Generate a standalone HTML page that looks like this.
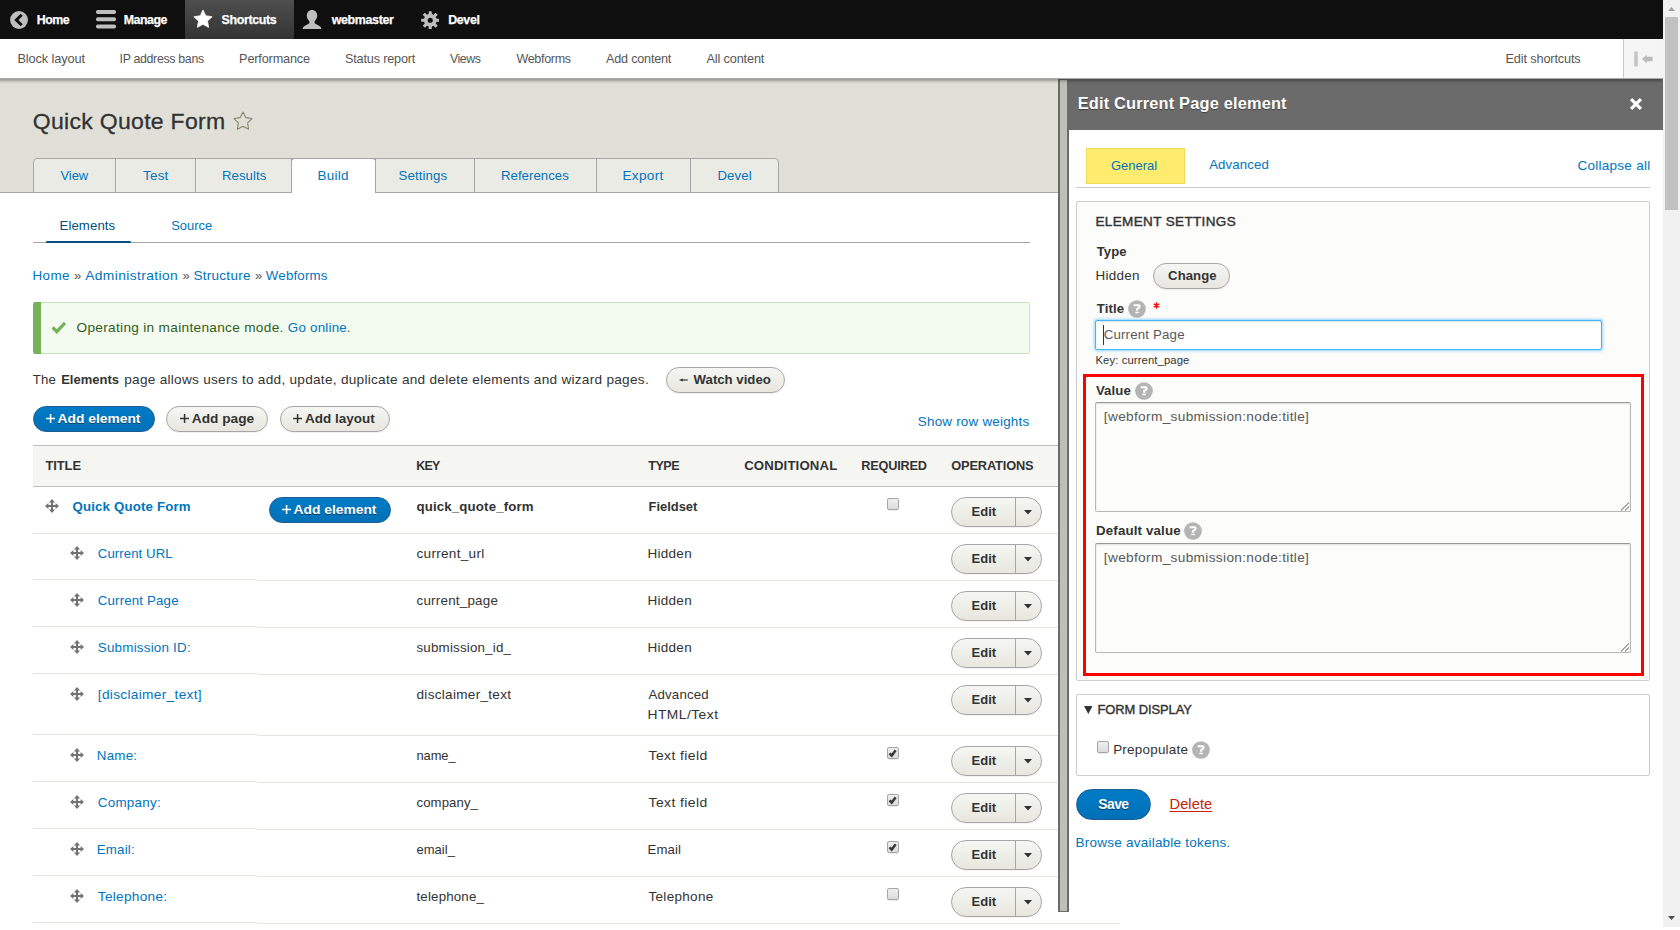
<!DOCTYPE html>
<html lang="en"><head><meta charset="utf-8"><title>Quick Quote Form | Build</title>
<style>
html,body{margin:0;padding:0;background:#fff;}
body{font-family:"Liberation Sans",sans-serif;font-size:13px;color:#333;overflow:hidden;}
#page{position:relative;width:1680px;height:930px;overflow:hidden;background:#fff;}
#page div,#page span.t,#page svg{position:absolute;box-sizing:border-box;}
span.t{white-space:pre;display:block;transform-origin:0 50%;}
.btn{border:1px solid #a6a6a6;border-radius:20px;background:linear-gradient(to bottom,#f6f6f3,#e7e7df);box-shadow:0 1px 1px rgba(0,0,0,.06);}
.btnp{border:1px solid #1e5c90;border-radius:20px;background:linear-gradient(to bottom,#007bc6,#0071b8);}
.help{border-radius:50%;background:#b5b5b5;}
.cb{border:1px solid #a5a5a5;border-radius:2px;background:linear-gradient(to bottom,#efefef,#dcdcdc);box-shadow:0 1px 0 rgba(0,0,0,.08);}

</style></head>
<body>
<div id="page">
<div style="left:0px;top:78px;width:1680px;height:115px;background:#e0e0d8;"></div>
<div style="left:0px;top:193px;width:1680px;height:737px;background:#fff;"></div>
<span class="t" style="left:32.00px;top:111px;font-size:22.5px;line-height:22.5px;color:#333;letter-spacing:0.278px;transform:translateX(0.78px) scaleX(1.0235);-webkit-text-stroke:0.3px #333;">Quick Quote Form</span>
<svg style="left:233px;top:111px;" width="20" height="20" viewBox="0 0 20 20"><path d="M10.00 1.00L12.82 6.62L19.04 7.56L14.57 11.98L15.58 18.19L10.00 15.30L4.42 18.19L5.43 11.98L0.96 7.56L7.18 6.62z" fill="none" stroke="#85856f" stroke-width="1.1" stroke-linejoin="round"/></svg>
<div style="left:0px;top:192px;width:1058px;height:1px;background:#a6a6a6;"></div>
<div style="left:33px;top:158px;width:746px;height:35px;background:#ebebe6;border:1px solid #a6a6a6;border-radius:4px 4px 0 0;"></div>
<div style="left:115px;top:159px;width:1px;height:33px;background:#a6a6a6;"></div>
<div style="left:195px;top:159px;width:1px;height:33px;background:#a6a6a6;"></div>
<div style="left:291px;top:159px;width:1px;height:33px;background:#a6a6a6;"></div>
<div style="left:375px;top:159px;width:1px;height:33px;background:#a6a6a6;"></div>
<div style="left:474px;top:159px;width:1px;height:33px;background:#a6a6a6;"></div>
<div style="left:596px;top:159px;width:1px;height:33px;background:#a6a6a6;"></div>
<div style="left:690px;top:159px;width:1px;height:33px;background:#a6a6a6;"></div>
<span class="t" style="left:60.00px;top:169px;font-size:13px;line-height:13px;color:#0074bd;letter-spacing:-0.059px;transform:translateX(0.50px) scaleX(0.9938);">View</span>
<span class="t" style="left:143.00px;top:169px;font-size:13px;line-height:13px;color:#0074bd;letter-spacing:0.238px;transform:translateX(0.00px) scaleX(1.0303);">Test</span>
<span class="t" style="left:221.00px;top:169px;font-size:13px;line-height:13px;color:#0074bd;letter-spacing:0.070px;transform:translateX(0.99px) scaleX(1.0099);">Results</span>
<span class="t" style="left:398.00px;top:169px;font-size:13px;line-height:13px;color:#0074bd;letter-spacing:0.121px;transform:translateX(0.50px) scaleX(1.0182);">Settings</span>
<span class="t" style="left:500.00px;top:169px;font-size:13px;line-height:13px;color:#0074bd;letter-spacing:0.067px;transform:translateX(0.99px) scaleX(1.0093);">References</span>
<span class="t" style="left:622.00px;top:169px;font-size:13px;line-height:13px;color:#0074bd;letter-spacing:0.310px;transform:translateX(0.46px) scaleX(1.0438);">Export</span>
<span class="t" style="left:717.00px;top:169px;font-size:13px;line-height:13px;color:#0074bd;letter-spacing:0.105px;transform:translateX(0.49px) scaleX(1.0132);">Devel</span>
<div style="left:291px;top:158px;width:85px;height:35px;background:#fff;border:1px solid #a6a6a6;border-bottom:0;border-radius:4px 4px 0 0;"></div>
<span class="t" style="left:317.00px;top:169px;font-size:13px;line-height:13px;color:#0074bd;letter-spacing:0.244px;transform:translateX(0.46px) scaleX(1.0365);">Build</span>
<div style="left:33px;top:242px;width:997px;height:1px;background:#a6a6a6;"></div>
<div style="left:46px;top:241px;width:85px;height:2px;background:#004f80;border-radius:1px;"></div>
<span class="t" style="left:59.00px;top:219px;font-size:13px;line-height:13px;color:#004f80;letter-spacing:0.106px;transform:translateX(0.49px) scaleX(1.0141);">Elements</span>
<span class="t" style="left:171.00px;top:219px;font-size:13px;line-height:13px;color:#0074bd;letter-spacing:-0.016px;transform:translateX(0.20px) scaleX(0.9980);">Source</span>
<span class="t" style="left:32.00px;top:269px;font-size:13px;line-height:13px;color:#0074bd;letter-spacing:0.363px;transform:translateX(0.47px) scaleX(1.0337);">Home</span>
<span class="t" style="left:74.00px;top:269px;font-size:13px;line-height:13px;color:#555;">»</span>
<span class="t" style="left:85.00px;top:269px;font-size:13px;line-height:13px;color:#0074bd;letter-spacing:0.365px;transform:translateX(0.20px) scaleX(1.0613);">Administration</span>
<span class="t" style="left:182.50px;top:269px;font-size:13px;line-height:13px;color:#555;">»</span>
<span class="t" style="left:193.00px;top:269px;font-size:13px;line-height:13px;color:#0074bd;letter-spacing:0.252px;transform:translateX(0.50px) scaleX(1.0399);">Structure</span>
<span class="t" style="left:255.00px;top:269px;font-size:13px;line-height:13px;color:#555;">»</span>
<span class="t" style="left:265.00px;top:269px;font-size:13px;line-height:13px;color:#0074bd;letter-spacing:0.189px;transform:translateX(0.80px) scaleX(1.0227);">Webforms</span>
<div style="left:33px;top:302px;width:8px;height:52px;background:#77b259;border-radius:2px 0 0 2px;"></div>
<div style="left:41px;top:302px;width:989px;height:52px;background:#f3faef;border:1px solid #c9e1bd;border-left:0;border-radius:0 2px 2px 0;"></div>
<svg style="left:51px;top:321.200px;" width="16" height="13" viewBox="0 0 16 13"><path d="M1.600 6.400l4.200 4.200L14 1.800" fill="none" stroke="#73b355" stroke-width="3.2"/></svg>
<span class="t" style="left:76.00px;top:321px;font-size:13px;line-height:13px;color:#325e1c;letter-spacing:0.299px;transform:translateX(0.50px) scaleX(1.0484);">Operating in maintenance mode.</span>
<span class="t" style="left:287.00px;top:321px;font-size:13px;line-height:13px;color:#0074bd;letter-spacing:0.199px;transform:translateX(0.80px) scaleX(1.0296);">Go online</span>
<span class="t" style="left:346.80px;top:321px;font-size:13px;line-height:13px;color:#325e1c;">.</span>
<span class="t" style="left:32.00px;top:373px;font-size:13px;line-height:13px;color:#333;letter-spacing:0.155px;transform:translateX(0.70px) scaleX(1.0142);">The</span>
<span class="t" style="left:61.00px;top:373px;font-size:13px;line-height:13px;color:#333;font-weight:700;letter-spacing:-0.005px;transform:translateX(0.20px) scaleX(0.9994);">Elements</span>
<span class="t" style="left:124.00px;top:373px;font-size:13px;line-height:13px;color:#333;letter-spacing:0.266px;transform:translateX(0.20px) scaleX(1.0465);">page allows users to add, update, duplicate and delete elements and wizard pages.</span>
<div class="btn" style="left:666px;top:367px;width:119px;height:26px;"></div>
<span class="t" style="left:693.00px;top:374px;font-size:12.64px;line-height:12.64px;color:#333;font-weight:700;transform:translateX(0.60px) scaleX(1.0448);">Watch video</span>
<svg style="left:678.500px;top:378.400px;" width="10" height="4" viewBox="0 0 10 4"><path d="M0 2L3.800 0.400V3.600z" fill="#333"/><path d="M3 2H8.700" stroke="#333" stroke-width="1.200" fill="none"/></svg>
<div class="btnp" style="left:33px;top:406px;width:122px;height:26px;"></div>
<svg style="left:45.8px;top:413.79999999999995px;" width="9.200" height="9.200" viewBox="-4.600 -4.600 9.200 9.200"><path d="M-4.500 0H4.500M0-4.500V4.500" stroke="#fff" stroke-width="1.500" fill="none"/></svg>
<span class="t" style="left:57.00px;top:413px;font-size:12.64px;line-height:12.64px;color:#fff;font-weight:700;transform:translateX(0.60px) scaleX(1.0933);text-shadow:0 1px rgba(0,0,0,.5);">Add element</span>
<div class="btn" style="left:166px;top:406px;width:102px;height:26px;"></div>
<svg style="left:179.5px;top:413.79999999999995px;" width="9.200" height="9.200" viewBox="-4.600 -4.600 9.200 9.200"><path d="M-4.500 0H4.500M0-4.500V4.500" stroke="#333" stroke-width="1.500" fill="none"/></svg>
<span class="t" style="left:191.00px;top:413px;font-size:12.64px;line-height:12.64px;color:#333;font-weight:700;transform:translateX(0.80px) scaleX(1.0836);">Add page</span>
<div class="btn" style="left:280px;top:406px;width:110px;height:26px;"></div>
<svg style="left:292.79999999999995px;top:413.79999999999995px;" width="9.200" height="9.200" viewBox="-4.600 -4.600 9.200 9.200"><path d="M-4.500 0H4.500M0-4.500V4.500" stroke="#333" stroke-width="1.500" fill="none"/></svg>
<span class="t" style="left:305.00px;top:413px;font-size:12.64px;line-height:12.64px;color:#333;font-weight:700;transform:translateX(0.10px) scaleX(1.0663);">Add layout</span>
<span class="t" style="left:917.00px;top:415px;font-size:13px;line-height:13px;color:#0074bd;letter-spacing:0.214px;transform:translateX(0.80px) scaleX(1.0315);">Show row weights</span>
<div style="left:33px;top:445px;width:1100px;height:42px;background:#f5f5f2;border-top:1px solid #bfbfba;border-bottom:1px solid #bfbfba;"></div>
<span class="t" style="left:45.00px;top:459px;font-size:13px;line-height:13px;color:#333;font-weight:700;letter-spacing:-0.080px;transform:translateX(0.50px) scaleX(0.9913);">TITLE</span>
<span class="t" style="left:416.00px;top:459px;font-size:13px;line-height:13px;color:#333;font-weight:700;letter-spacing:-0.699px;transform:translateX(0.20px) scaleX(0.9509);">KEY</span>
<span class="t" style="left:648.00px;top:459px;font-size:13px;line-height:13px;color:#333;font-weight:700;letter-spacing:-0.447px;transform:translateX(0.20px) scaleX(0.9623);">TYPE</span>
<span class="t" style="left:744.00px;top:459px;font-size:13px;line-height:13px;color:#333;font-weight:700;letter-spacing:0.136px;transform:translateX(0.20px) scaleX(1.0153);">CONDITIONAL</span>
<span class="t" style="left:861.00px;top:459px;font-size:13px;line-height:13px;color:#333;font-weight:700;letter-spacing:-0.206px;transform:translateX(0.20px) scaleX(0.9793);">REQUIRED</span>
<span class="t" style="left:951.00px;top:459px;font-size:13px;line-height:13px;color:#333;font-weight:700;letter-spacing:-0.148px;transform:translateX(0.20px) scaleX(0.9847);">OPERATIONS</span>
<div style="left:33px;top:533px;width:1100px;height:1px;background:#e6e4df;"></div>
<svg style="left:45px;top:499px;" width="14" height="14" viewBox="0 0 14 14"><path d="M7 0L10.100 3.400H8.050V5.950H10.600V3.900L14 7L10.600 10.100V8.050H8.050V10.600H10.100L7 14L3.900 10.600H5.950V8.050H3.400V10.100L0 7L3.400 3.900V5.950H5.950V3.400H3.900z" fill="#737373"/></svg>
<span class="t" style="left:72.00px;top:500px;font-size:13px;line-height:13px;color:#0074bd;font-weight:700;letter-spacing:0.152px;transform:translateX(0.50px) scaleX(1.0206);">Quick Quote Form</span>
<div class="btnp" style="left:269px;top:497px;width:122px;height:26px;"></div>
<svg style="left:281.79999999999995px;top:505.09999999999997px;" width="9.200" height="9.200" viewBox="-4.600 -4.600 9.200 9.200"><path d="M-4.500 0H4.500M0-4.500V4.500" stroke="#fff" stroke-width="1.500" fill="none"/></svg>
<span class="t" style="left:293.00px;top:504px;font-size:12.64px;line-height:12.64px;color:#fff;font-weight:700;transform:translateX(0.60px) scaleX(1.0933);text-shadow:0 1px rgba(0,0,0,.5);">Add element</span>
<span class="t" style="left:416.00px;top:500px;font-size:13px;line-height:13px;color:#333;font-weight:700;letter-spacing:0.143px;transform:translateX(0.50px) scaleX(1.0195);">quick_quote_form</span>
<span class="t" style="left:648.00px;top:500px;font-size:13px;line-height:13px;color:#333;font-weight:700;letter-spacing:-0.021px;transform:translateX(0.50px) scaleX(0.9970);">Fieldset</span>
<div class="cb" style="left:887px;top:498px;width:12px;height:12px;"></div>
<div class="btn" style="left:951px;top:497px;width:91px;height:30px;"></div>
<div style="left:1015px;top:498px;width:1px;height:28px;background:#a6a6a6;"></div>
<span class="t" style="left:971.00px;top:505px;font-size:13px;line-height:13px;color:#333;font-weight:700;letter-spacing:-0.004px;transform:translateX(0.60px) scaleX(0.9995);">Edit</span>
<svg style="left:1024px;top:510px;" width="8" height="5" viewBox="0 0 8 5"><path d="M0 0h8L4 4.6z" fill="#333"/></svg>
<div style="left:33px;top:579px;width:224px;height:1px;background:#e6e4df;"></div>
<div style="left:257px;top:580px;width:900px;height:1px;background:#e6e4df;"></div>
<svg style="left:70px;top:546px;" width="14" height="14" viewBox="0 0 14 14"><path d="M7 0L10.100 3.400H8.050V5.950H10.600V3.900L14 7L10.600 10.100V8.050H8.050V10.600H10.100L7 14L3.900 10.600H5.950V8.050H3.400V10.100L0 7L3.400 3.900V5.950H5.950V3.400H3.900z" fill="#737373"/></svg>
<span class="t" style="left:97.00px;top:547px;font-size:13px;line-height:13px;color:#0074bd;letter-spacing:0.092px;transform:translateX(0.80px) scaleX(1.0128);">Current URL</span>
<span class="t" style="left:416.00px;top:547px;font-size:13px;line-height:13px;color:#333;letter-spacing:0.270px;transform:translateX(0.50px) scaleX(1.0454);">current_url</span>
<span class="t" style="left:647.00px;top:547px;font-size:13px;line-height:13px;color:#333;letter-spacing:0.283px;transform:translateX(0.46px) scaleX(1.0367);">Hidden</span>
<div class="btn" style="left:951px;top:544px;width:91px;height:30px;"></div>
<div style="left:1015px;top:545px;width:1px;height:28px;background:#a6a6a6;"></div>
<span class="t" style="left:971.00px;top:552px;font-size:13px;line-height:13px;color:#333;font-weight:700;letter-spacing:-0.004px;transform:translateX(0.60px) scaleX(0.9995);">Edit</span>
<svg style="left:1024px;top:557px;" width="8" height="5" viewBox="0 0 8 5"><path d="M0 0h8L4 4.6z" fill="#333"/></svg>
<div style="left:33px;top:626px;width:224px;height:1px;background:#e6e4df;"></div>
<div style="left:257px;top:627px;width:900px;height:1px;background:#e6e4df;"></div>
<svg style="left:70px;top:593px;" width="14" height="14" viewBox="0 0 14 14"><path d="M7 0L10.100 3.400H8.050V5.950H10.600V3.900L14 7L10.600 10.100V8.050H8.050V10.600H10.100L7 14L3.900 10.600H5.950V8.050H3.400V10.100L0 7L3.400 3.900V5.950H5.950V3.400H3.900z" fill="#737373"/></svg>
<span class="t" style="left:97.00px;top:594px;font-size:13px;line-height:13px;color:#0074bd;letter-spacing:0.152px;transform:translateX(0.80px) scaleX(1.0221);">Current Page</span>
<span class="t" style="left:416.00px;top:594px;font-size:13px;line-height:13px;color:#333;letter-spacing:0.212px;transform:translateX(0.50px) scaleX(1.0316);">current_page</span>
<span class="t" style="left:647.00px;top:594px;font-size:13px;line-height:13px;color:#333;letter-spacing:0.283px;transform:translateX(0.46px) scaleX(1.0367);">Hidden</span>
<div class="btn" style="left:951px;top:591px;width:91px;height:30px;"></div>
<div style="left:1015px;top:592px;width:1px;height:28px;background:#a6a6a6;"></div>
<span class="t" style="left:971.00px;top:599px;font-size:13px;line-height:13px;color:#333;font-weight:700;letter-spacing:-0.004px;transform:translateX(0.60px) scaleX(0.9995);">Edit</span>
<svg style="left:1024px;top:604px;" width="8" height="5" viewBox="0 0 8 5"><path d="M0 0h8L4 4.6z" fill="#333"/></svg>
<div style="left:33px;top:673px;width:224px;height:1px;background:#e6e4df;"></div>
<div style="left:257px;top:674px;width:900px;height:1px;background:#e6e4df;"></div>
<svg style="left:70px;top:640px;" width="14" height="14" viewBox="0 0 14 14"><path d="M7 0L10.100 3.400H8.050V5.950H10.600V3.900L14 7L10.600 10.100V8.050H8.050V10.600H10.100L7 14L3.900 10.600H5.950V8.050H3.400V10.100L0 7L3.400 3.900V5.950H5.950V3.400H3.900z" fill="#737373"/></svg>
<span class="t" style="left:97.00px;top:641px;font-size:13px;line-height:13px;color:#0074bd;letter-spacing:0.201px;transform:translateX(0.80px) scaleX(1.0311);">Submission ID:</span>
<span class="t" style="left:416.00px;top:641px;font-size:13px;line-height:13px;color:#333;letter-spacing:0.181px;transform:translateX(0.50px) scaleX(1.0267);">submission_id_</span>
<span class="t" style="left:647.00px;top:641px;font-size:13px;line-height:13px;color:#333;letter-spacing:0.283px;transform:translateX(0.46px) scaleX(1.0367);">Hidden</span>
<div class="btn" style="left:951px;top:638px;width:91px;height:30px;"></div>
<div style="left:1015px;top:639px;width:1px;height:28px;background:#a6a6a6;"></div>
<span class="t" style="left:971.00px;top:646px;font-size:13px;line-height:13px;color:#333;font-weight:700;letter-spacing:-0.004px;transform:translateX(0.60px) scaleX(0.9995);">Edit</span>
<svg style="left:1024px;top:651px;" width="8" height="5" viewBox="0 0 8 5"><path d="M0 0h8L4 4.6z" fill="#333"/></svg>
<div style="left:33px;top:734px;width:224px;height:1px;background:#e6e4df;"></div>
<div style="left:257px;top:735px;width:900px;height:1px;background:#e6e4df;"></div>
<svg style="left:70px;top:687px;" width="14" height="14" viewBox="0 0 14 14"><path d="M7 0L10.100 3.400H8.050V5.950H10.600V3.900L14 7L10.600 10.100V8.050H8.050V10.600H10.100L7 14L3.900 10.600H5.950V8.050H3.400V10.100L0 7L3.400 3.900V5.950H5.950V3.400H3.900z" fill="#737373"/></svg>
<span class="t" style="left:97.00px;top:688px;font-size:13px;line-height:13px;color:#0074bd;letter-spacing:0.294px;transform:translateX(0.80px) scaleX(1.0530);">[disclaimer_text]</span>
<span class="t" style="left:416.00px;top:688px;font-size:13px;line-height:13px;color:#333;letter-spacing:0.267px;transform:translateX(0.50px) scaleX(1.0449);">disclaimer_text</span>
<span class="t" style="left:648.00px;top:688px;font-size:13px;line-height:13px;color:#333;letter-spacing:0.162px;transform:translateX(0.50px) scaleX(1.0200);">Advanced</span>
<span class="t" style="left:647.00px;top:708px;font-size:13px;line-height:13px;color:#333;letter-spacing:0.452px;transform:translateX(0.44px) scaleX(1.0616);">HTML/Text</span>
<div class="btn" style="left:951px;top:685px;width:91px;height:30px;"></div>
<div style="left:1015px;top:686px;width:1px;height:28px;background:#a6a6a6;"></div>
<span class="t" style="left:971.00px;top:693px;font-size:13px;line-height:13px;color:#333;font-weight:700;letter-spacing:-0.004px;transform:translateX(0.60px) scaleX(0.9995);">Edit</span>
<svg style="left:1024px;top:698px;" width="8" height="5" viewBox="0 0 8 5"><path d="M0 0h8L4 4.6z" fill="#333"/></svg>
<div style="left:33px;top:781px;width:224px;height:1px;background:#e6e4df;"></div>
<div style="left:257px;top:782px;width:900px;height:1px;background:#e6e4df;"></div>
<svg style="left:70px;top:748px;" width="14" height="14" viewBox="0 0 14 14"><path d="M7 0L10.100 3.400H8.050V5.950H10.600V3.900L14 7L10.600 10.100V8.050H8.050V10.600H10.100L7 14L3.900 10.600H5.950V8.050H3.400V10.100L0 7L3.400 3.900V5.950H5.950V3.400H3.900z" fill="#737373"/></svg>
<span class="t" style="left:96.00px;top:749px;font-size:13px;line-height:13px;color:#0074bd;letter-spacing:0.234px;transform:translateX(0.77px) scaleX(1.0262);">Name:</span>
<span class="t" style="left:416.00px;top:749px;font-size:13px;line-height:13px;color:#333;letter-spacing:-0.078px;transform:translateX(0.50px) scaleX(0.9924);">name_</span>
<span class="t" style="left:648.00px;top:749px;font-size:13px;line-height:13px;color:#333;letter-spacing:0.385px;transform:translateX(0.50px) scaleX(1.0727);">Text field</span>
<div class="cb" style="left:887px;top:747px;width:12px;height:12px;"></div>
<svg style="left:887px;top:746px;" width="13" height="13" viewBox="0 0 13 13"><path d="M2.500 7.300L4.700 9.500L8.700 4.300" fill="none" stroke="#383838" stroke-width="2.500"/></svg>
<div class="btn" style="left:951px;top:746px;width:91px;height:30px;"></div>
<div style="left:1015px;top:747px;width:1px;height:28px;background:#a6a6a6;"></div>
<span class="t" style="left:971.00px;top:754px;font-size:13px;line-height:13px;color:#333;font-weight:700;letter-spacing:-0.004px;transform:translateX(0.60px) scaleX(0.9995);">Edit</span>
<svg style="left:1024px;top:759px;" width="8" height="5" viewBox="0 0 8 5"><path d="M0 0h8L4 4.6z" fill="#333"/></svg>
<div style="left:33px;top:828px;width:224px;height:1px;background:#e6e4df;"></div>
<div style="left:257px;top:829px;width:900px;height:1px;background:#e6e4df;"></div>
<svg style="left:70px;top:795px;" width="14" height="14" viewBox="0 0 14 14"><path d="M7 0L10.100 3.400H8.050V5.950H10.600V3.900L14 7L10.600 10.100V8.050H8.050V10.600H10.100L7 14L3.900 10.600H5.950V8.050H3.400V10.100L0 7L3.400 3.900V5.950H5.950V3.400H3.900z" fill="#737373"/></svg>
<span class="t" style="left:97.00px;top:796px;font-size:13px;line-height:13px;color:#0074bd;letter-spacing:0.247px;transform:translateX(0.80px) scaleX(1.0304);">Company:</span>
<span class="t" style="left:416.00px;top:796px;font-size:13px;line-height:13px;color:#333;letter-spacing:0.102px;transform:translateX(0.50px) scaleX(1.0119);">company_</span>
<span class="t" style="left:648.00px;top:796px;font-size:13px;line-height:13px;color:#333;letter-spacing:0.385px;transform:translateX(0.50px) scaleX(1.0727);">Text field</span>
<div class="cb" style="left:887px;top:794px;width:12px;height:12px;"></div>
<svg style="left:887px;top:793px;" width="13" height="13" viewBox="0 0 13 13"><path d="M2.500 7.300L4.700 9.500L8.700 4.300" fill="none" stroke="#383838" stroke-width="2.500"/></svg>
<div class="btn" style="left:951px;top:793px;width:91px;height:30px;"></div>
<div style="left:1015px;top:794px;width:1px;height:28px;background:#a6a6a6;"></div>
<span class="t" style="left:971.00px;top:801px;font-size:13px;line-height:13px;color:#333;font-weight:700;letter-spacing:-0.004px;transform:translateX(0.60px) scaleX(0.9995);">Edit</span>
<svg style="left:1024px;top:806px;" width="8" height="5" viewBox="0 0 8 5"><path d="M0 0h8L4 4.6z" fill="#333"/></svg>
<div style="left:33px;top:875px;width:224px;height:1px;background:#e6e4df;"></div>
<div style="left:257px;top:876px;width:900px;height:1px;background:#e6e4df;"></div>
<svg style="left:70px;top:842px;" width="14" height="14" viewBox="0 0 14 14"><path d="M7 0L10.100 3.400H8.050V5.950H10.600V3.900L14 7L10.600 10.100V8.050H8.050V10.600H10.100L7 14L3.900 10.600H5.950V8.050H3.400V10.100L0 7L3.400 3.900V5.950H5.950V3.400H3.900z" fill="#737373"/></svg>
<span class="t" style="left:96.00px;top:843px;font-size:13px;line-height:13px;color:#0074bd;letter-spacing:0.165px;transform:translateX(0.78px) scaleX(1.0245);">Email:</span>
<span class="t" style="left:416.00px;top:843px;font-size:13px;line-height:13px;color:#333;letter-spacing:0.013px;transform:translateX(0.50px) scaleX(1.0017);">email_</span>
<span class="t" style="left:647.00px;top:843px;font-size:13px;line-height:13px;color:#333;letter-spacing:0.109px;transform:translateX(0.49px) scaleX(1.0139);">Email</span>
<div class="cb" style="left:887px;top:841px;width:12px;height:12px;"></div>
<svg style="left:887px;top:840px;" width="13" height="13" viewBox="0 0 13 13"><path d="M2.500 7.300L4.700 9.500L8.700 4.300" fill="none" stroke="#383838" stroke-width="2.500"/></svg>
<div class="btn" style="left:951px;top:840px;width:91px;height:30px;"></div>
<div style="left:1015px;top:841px;width:1px;height:28px;background:#a6a6a6;"></div>
<span class="t" style="left:971.00px;top:848px;font-size:13px;line-height:13px;color:#333;font-weight:700;letter-spacing:-0.004px;transform:translateX(0.60px) scaleX(0.9995);">Edit</span>
<svg style="left:1024px;top:853px;" width="8" height="5" viewBox="0 0 8 5"><path d="M0 0h8L4 4.6z" fill="#333"/></svg>
<div style="left:33px;top:922px;width:224px;height:1px;background:#e6e4df;"></div>
<div style="left:257px;top:923px;width:900px;height:1px;background:#e6e4df;"></div>
<svg style="left:70px;top:889px;" width="14" height="14" viewBox="0 0 14 14"><path d="M7 0L10.100 3.400H8.050V5.950H10.600V3.900L14 7L10.600 10.100V8.050H8.050V10.600H10.100L7 14L3.900 10.600H5.950V8.050H3.400V10.100L0 7L3.400 3.900V5.950H5.950V3.400H3.900z" fill="#737373"/></svg>
<span class="t" style="left:97.00px;top:890px;font-size:13px;line-height:13px;color:#0074bd;letter-spacing:0.298px;transform:translateX(0.80px) scaleX(1.0445);">Telephone:</span>
<span class="t" style="left:416.00px;top:890px;font-size:13px;line-height:13px;color:#333;letter-spacing:0.168px;transform:translateX(0.50px) scaleX(1.0237);">telephone_</span>
<span class="t" style="left:648.00px;top:890px;font-size:13px;line-height:13px;color:#333;letter-spacing:0.284px;transform:translateX(0.50px) scaleX(1.0396);">Telephone</span>
<div class="cb" style="left:887px;top:888px;width:12px;height:12px;"></div>
<div class="btn" style="left:951px;top:887px;width:91px;height:30px;"></div>
<div style="left:1015px;top:888px;width:1px;height:28px;background:#a6a6a6;"></div>
<span class="t" style="left:971.00px;top:895px;font-size:13px;line-height:13px;color:#333;font-weight:700;letter-spacing:-0.004px;transform:translateX(0.60px) scaleX(0.9995);">Edit</span>
<svg style="left:1024px;top:900px;" width="8" height="5" viewBox="0 0 8 5"><path d="M0 0h8L4 4.6z" fill="#333"/></svg>
<div style="left:1058px;top:79px;width:11px;height:833px;background:#bfbfba;border:1px solid #6b6b6b;border-left-width:2px;border-right-width:2px;"></div>
<div style="left:1069px;top:79px;width:594px;height:833px;background:#fff;"></div>
<div style="left:1067px;top:79px;width:596px;height:51px;background:#6b6b6b;"></div>
<span class="t" style="left:1077.00px;top:96px;font-size:16px;line-height:16px;color:#fff;font-weight:700;letter-spacing:0.177px;transform:translateX(0.78px) scaleX(1.0217);text-shadow:0 1px 1px rgba(0,0,0,.4);">Edit Current Page element</span>
<svg style="left:1629px;top:97px;" width="14" height="14" viewBox="-7 -7 14 14"><path d="M-4.950-4.950L4.950 4.950M4.950-4.950L-4.950 4.950" stroke="#fff" stroke-width="3.200" fill="none"/></svg>
<div style="left:1086px;top:148px;width:99px;height:36px;background:#ffec6e;border:1px solid #f0db52;"></div>
<span class="t" style="left:1111.00px;top:159px;font-size:13px;line-height:13px;color:#0074bd;letter-spacing:-0.013px;transform:translateX(0.00px) scaleX(0.9983);">General</span>
<span class="t" style="left:1209.00px;top:158px;font-size:13px;line-height:13px;color:#0074bd;letter-spacing:0.120px;transform:translateX(0.20px) scaleX(1.0148);">Advanced</span>
<span class="t" style="left:1577.00px;top:159px;font-size:13px;line-height:13px;color:#0074bd;letter-spacing:0.240px;transform:translateX(0.50px) scaleX(1.0407);">Collapse all</span>
<div style="left:1076px;top:187px;width:574px;height:1px;background:#ccc;"></div>
<div style="left:1076px;top:201px;width:574px;height:480px;background:#fcfcfa;border:1px solid #ccc;border-radius:2px;"></div>
<span class="t" style="left:1095.00px;top:215px;font-size:13px;line-height:13px;color:#333;letter-spacing:0.335px;transform:translateX(0.46px) scaleX(1.0404);-webkit-text-stroke:0.4px #333;">ELEMENT SETTINGS</span>
<span class="t" style="left:1096.00px;top:245px;font-size:13px;line-height:13px;color:#333;font-weight:700;letter-spacing:0.042px;transform:translateX(0.80px) scaleX(1.0043);">Type</span>
<span class="t" style="left:1095.00px;top:269px;font-size:13px;line-height:13px;color:#333;letter-spacing:0.264px;transform:translateX(0.47px) scaleX(1.0342);">Hidden</span>
<div class="btn" style="left:1153px;top:263px;width:77px;height:26px;"></div>
<span class="t" style="left:1168.00px;top:269px;font-size:13px;line-height:13px;color:#333;font-weight:700;letter-spacing:0.075px;transform:translateX(0.10px) scaleX(1.0080);">Change</span>
<span class="t" style="left:1096.00px;top:302px;font-size:13px;line-height:13px;color:#333;font-weight:700;letter-spacing:0.091px;transform:translateX(0.80px) scaleX(1.0141);">Title</span>
<svg style="left:1128px;top:300px;" width="18" height="18" viewBox="0 0 18 18"><circle cx="9" cy="9" r="8.850" fill="#b4b4b4"/><path d="M5.600 5.300H10.500Q11.700 5.300 11.700 6.500Q11.700 7.700 9.200 8.900V10.700" stroke="#fff" stroke-width="2.100" fill="none"/><rect x="7.300" y="11.700" width="3.500" height="1.500" fill="#fff"/></svg>
<svg style="left:1153px;top:302px;" width="7" height="7" viewBox="-3.500 -3.500 7 7"><path d="M0-3.200V3.200M-2.800-1.600L2.800 1.600M-2.800 1.600L2.800-1.600" stroke="#e11" stroke-width="1.350" fill="none"/></svg>
<div style="left:1095px;top:320px;width:507px;height:30px;background:#fff;border:1px solid #40b6ff;border-radius:2px;box-shadow:0 0 3px 1px rgba(64,182,255,.55), inset 0 1px 2px rgba(0,0,0,.125);"></div>
<div style="left:1103px;top:325px;width:1px;height:20px;background:#333;"></div>
<span class="t" style="left:1103.00px;top:328px;font-size:13px;line-height:13px;color:#595959;letter-spacing:0.156px;transform:translateX(0.70px) scaleX(1.0228);">Current Page</span>
<span class="t" style="left:1095.00px;top:355px;font-size:11px;line-height:11px;color:#333;letter-spacing:0.120px;transform:translateX(0.50px) scaleX(1.0219);">Key: current_page</span>
<div style="left:1083px;top:374px;width:561px;height:302px;border:3px solid #f00;"></div>
<span class="t" style="left:1095.00px;top:384px;font-size:13px;line-height:13px;color:#333;font-weight:700;letter-spacing:0.119px;transform:translateX(0.90px) scaleX(1.0143);">Value</span>
<svg style="left:1135px;top:382px;" width="18" height="18" viewBox="0 0 18 18"><circle cx="9" cy="9" r="8.850" fill="#b4b4b4"/><path d="M5.600 5.300H10.500Q11.700 5.300 11.700 6.500Q11.700 7.700 9.200 8.900V10.700" stroke="#fff" stroke-width="2.100" fill="none"/><rect x="7.300" y="11.700" width="3.500" height="1.500" fill="#fff"/></svg>
<div style="left:1095px;top:402px;width:536px;height:109.5px;background:#fcfcfa;border:1px solid #b8b8b8;border-top-color:#999;border-radius:2px;box-shadow:inset 0 1px 2px rgba(0,0,0,.125);"></div>
<span class="t" style="left:1103.00px;top:410px;font-size:13px;line-height:13px;color:#595959;letter-spacing:0.307px;transform:translateX(0.80px) scaleX(1.0524);">[webform_submission:node:title]</span>
<svg style="left:1620px;top:500.5px;" width="10" height="10" viewBox="0 0 10 10"><path d="M1 9.400L9 1.500M5 9.400L9 5.500" stroke="#555" stroke-width="1" fill="none"/></svg>
<span class="t" style="left:1096.00px;top:524px;font-size:13px;line-height:13px;color:#333;font-weight:700;letter-spacing:0.143px;transform:translateX(0.10px) scaleX(1.0218);">Default value</span>
<svg style="left:1184px;top:522px;" width="18" height="18" viewBox="0 0 18 18"><circle cx="9" cy="9" r="8.850" fill="#b4b4b4"/><path d="M5.600 5.300H10.500Q11.700 5.300 11.700 6.500Q11.700 7.700 9.200 8.900V10.700" stroke="#fff" stroke-width="2.100" fill="none"/><rect x="7.300" y="11.700" width="3.500" height="1.500" fill="#fff"/></svg>
<div style="left:1095px;top:543px;width:536px;height:110px;background:#fcfcfa;border:1px solid #b8b8b8;border-top-color:#999;border-radius:2px;box-shadow:inset 0 1px 2px rgba(0,0,0,.125);"></div>
<span class="t" style="left:1103.00px;top:551px;font-size:13px;line-height:13px;color:#595959;letter-spacing:0.307px;transform:translateX(0.80px) scaleX(1.0524);">[webform_submission:node:title]</span>
<svg style="left:1620px;top:642px;" width="10" height="10" viewBox="0 0 10 10"><path d="M1 9.400L9 1.500M5 9.400L9 5.500" stroke="#555" stroke-width="1" fill="none"/></svg>
<div style="left:1076px;top:694px;width:574px;height:82px;background:#fff;border:1px solid #ccc;border-radius:2px;"></div>
<svg style="left:1083.700px;top:705.700px;" width="8.600" height="8" viewBox="0 0 8.600 8"><path d="M0 0h8.600L4.300 8z" fill="#333"/></svg>
<span class="t" style="left:1097.00px;top:703px;font-size:13px;line-height:13px;color:#333;letter-spacing:-0.067px;transform:translateX(0.51px) scaleX(0.9923);-webkit-text-stroke:0.4px #333;">FORM DISPLAY</span>
<div class="cb" style="left:1097px;top:741px;width:12px;height:12px;"></div>
<span class="t" style="left:1113.00px;top:743px;font-size:13px;line-height:13px;color:#333;letter-spacing:0.224px;transform:translateX(0.17px) scaleX(1.0335);">Prepopulate</span>
<svg style="left:1192px;top:741px;" width="18" height="18" viewBox="0 0 18 18"><circle cx="9" cy="9" r="8.850" fill="#b4b4b4"/><path d="M5.600 5.300H10.500Q11.700 5.300 11.700 6.500Q11.700 7.700 9.200 8.900V10.700" stroke="#fff" stroke-width="2.100" fill="none"/><rect x="7.300" y="11.700" width="3.500" height="1.500" fill="#fff"/></svg>
<div class="btnp" style="left:1076px;top:789px;width:75px;height:31px;"></div>
<span class="t" style="left:1098.00px;top:797px;font-size:14.5px;line-height:14.5px;color:#fff;font-weight:700;letter-spacing:-0.541px;transform:translateX(0.30px) scaleX(0.9541);text-shadow:0 1px rgba(0,0,0,.5);">Save</span>
<span class="t" style="left:1169.00px;top:797px;font-size:14.5px;line-height:14.5px;color:#c72100;letter-spacing:0.074px;transform:translateX(0.49px) scaleX(1.0092);text-decoration:underline;text-underline-offset:2px;">Delete</span>
<span class="t" style="left:1075.00px;top:836px;font-size:13px;line-height:13px;color:#0074bd;letter-spacing:0.230px;transform:translateX(0.46px) scaleX(1.0387);">Browse available tokens.</span>
<div style="left:1058px;top:912px;width:605px;height:18px;background:#fff;"></div>
<div style="left:1058px;top:923px;width:62px;height:1px;background:#e6e4df;"></div>
<div style="left:0px;top:39px;width:1663px;height:40px;background:#fff;border-bottom:1px solid #aaa;box-shadow:-2px 1px 3px 1px rgba(0,0,0,.3333);"></div>
<div style="left:0px;top:0px;width:1663px;height:39px;background:#0f0f0f;"></div>
<div style="left:185px;top:0px;width:109px;height:39px;background:linear-gradient(to bottom,#4e4e4e,#333);"></div>
<svg style="left:10.200px;top:10.800px;" width="18" height="18" viewBox="0 0 18 18"><circle cx="9" cy="9" r="8.950" fill="#bebebe"/><path d="M11.700 3.700L6.400 9L11.700 14.300" fill="none" stroke="#0f0f0f" stroke-width="3"/></svg>
<span class="t" style="left:36.00px;top:13px;font-size:13px;line-height:13px;color:#fff;font-weight:700;letter-spacing:-0.593px;transform:translateX(0.80px) scaleX(0.9528);-webkit-text-stroke:0.25px #fff;">Home</span>
<svg style="left:96px;top:10.200px;" width="20" height="19" viewBox="0 0 20 19"><rect x="0" y="0" width="20" height="4" rx="1.800" fill="#bebebe"/><rect x="0" y="7.300" width="20" height="4" rx="1.800" fill="#bebebe"/><rect x="0" y="14.600" width="20" height="4" rx="1.800" fill="#bebebe"/></svg>
<span class="t" style="left:123.00px;top:13px;font-size:13px;line-height:13px;color:#fff;font-weight:700;letter-spacing:-0.491px;transform:translateX(0.70px) scaleX(0.9515);-webkit-text-stroke:0.25px #fff;">Manage</span>
<svg style="left:193px;top:9px;" width="20" height="20.500" viewBox="0 0 20 20.500"><path d="M10.00 1.00L12.76 6.80L19.13 7.63L14.47 12.05L15.64 18.37L10.00 15.30L4.36 18.37L5.53 12.05L0.87 7.63L7.24 6.80z" fill="#fff" stroke="#fff" stroke-width="0.800" stroke-linejoin="round"/></svg>
<span class="t" style="left:221.00px;top:13px;font-size:13px;line-height:13px;color:#fff;font-weight:700;letter-spacing:-0.356px;transform:translateX(0.50px) scaleX(0.9550);-webkit-text-stroke:0.25px #fff;">Shortcuts</span>
<svg style="left:302px;top:9.500px;" width="20" height="19.500" viewBox="0 0 20 19.500"><path d="M10 0C13 0 15.200 2.400 15.200 5.600C15.200 8 14.200 10 12.600 11.200V12.600C12.600 13.600 13.600 14.200 15.600 15C18 16 19.300 17 19.400 19.500H0.600C0.700 17 2 16 4.400 15C6.400 14.200 7.400 13.600 7.400 12.600V11.200C5.800 10 4.800 8 4.800 5.600C4.800 2.400 7 0 10 0z" fill="#bebebe"/></svg>
<span class="t" style="left:331.00px;top:13px;font-size:13px;line-height:13px;color:#fff;font-weight:700;letter-spacing:-0.376px;transform:translateX(0.66px) scaleX(0.9582);-webkit-text-stroke:0.25px #fff;">webmaster</span>
<svg style="left:420.700px;top:10.700px;" width="18.500" height="18.500" viewBox="-10 -10 20 20"><g fill="#bebebe"><rect x="-1.650" y="-9.800" width="3.300" height="5" rx="0.500" transform="rotate(0)"/><rect x="-1.650" y="-9.800" width="3.300" height="5" rx="0.500" transform="rotate(45)"/><rect x="-1.650" y="-9.800" width="3.300" height="5" rx="0.500" transform="rotate(90)"/><rect x="-1.650" y="-9.800" width="3.300" height="5" rx="0.500" transform="rotate(135)"/><rect x="-1.650" y="-9.800" width="3.300" height="5" rx="0.500" transform="rotate(180)"/><rect x="-1.650" y="-9.800" width="3.300" height="5" rx="0.500" transform="rotate(225)"/><rect x="-1.650" y="-9.800" width="3.300" height="5" rx="0.500" transform="rotate(270)"/><rect x="-1.650" y="-9.800" width="3.300" height="5" rx="0.500" transform="rotate(315)"/></g><circle r="4.850" fill="none" stroke="#bebebe" stroke-width="4.100"/></svg>
<span class="t" style="left:448.00px;top:13px;font-size:13px;line-height:13px;color:#fff;font-weight:700;letter-spacing:-0.389px;transform:translateX(0.20px) scaleX(0.9563);-webkit-text-stroke:0.25px #fff;">Devel</span>
<span class="t" style="left:17.00px;top:52px;font-size:13px;line-height:13px;color:#565656;letter-spacing:-0.110px;transform:translateX(0.42px) scaleX(0.9829);">Block layout</span>
<span class="t" style="left:119.00px;top:52px;font-size:13px;line-height:13px;color:#565656;letter-spacing:-0.343px;transform:translateX(0.55px) scaleX(0.9511);">IP address bans</span>
<span class="t" style="left:239.00px;top:52px;font-size:13px;line-height:13px;color:#565656;letter-spacing:-0.179px;transform:translateX(0.12px) scaleX(0.9762);">Performance</span>
<span class="t" style="left:345.00px;top:52px;font-size:13px;line-height:13px;color:#565656;letter-spacing:-0.176px;transform:translateX(0.00px) scaleX(0.9725);">Status report</span>
<span class="t" style="left:450.00px;top:52px;font-size:13px;line-height:13px;color:#565656;letter-spacing:-0.466px;transform:translateX(0.00px) scaleX(0.9493);">Views</span>
<span class="t" style="left:516.00px;top:52px;font-size:13px;line-height:13px;color:#565656;letter-spacing:-0.318px;transform:translateX(0.40px) scaleX(0.9639);">Webforms</span>
<span class="t" style="left:606.00px;top:52px;font-size:13px;line-height:13px;color:#565656;letter-spacing:-0.210px;transform:translateX(0.00px) scaleX(0.9708);">Add content</span>
<span class="t" style="left:706.00px;top:52px;font-size:13px;line-height:13px;color:#565656;letter-spacing:-0.148px;transform:translateX(0.50px) scaleX(0.9763);">All content</span>
<span class="t" style="left:1505.00px;top:52px;font-size:13px;line-height:13px;color:#565656;letter-spacing:-0.140px;transform:translateX(0.52px) scaleX(0.9773);">Edit shortcuts</span>
<div style="left:1623px;top:39px;width:40px;height:39px;background:#f5f5f5;border-left:1px solid #c9c9c9;"></div>
<svg style="left:1634px;top:51px;" width="20" height="16" viewBox="0 0 20 16"><rect x="0.150" y="0.400" width="3.700" height="15.100" rx="0.500" fill="#c6c6c6"/><path d="M8 8l4.700-4.200v2h5.900v4.400h-5.900v2z" fill="#bbb"/></svg>
<div style="left:1663px;top:0px;width:17px;height:927px;background:#f1f1f1;"></div>
<div style="left:1663px;top:927px;width:17px;height:3px;background:#fff;"></div>
<div style="left:1665px;top:17px;width:13px;height:193px;background:#c1c1c1;"></div>
<svg style="left:1668px;top:7px;" width="7" height="4" viewBox="0 0 7 4"><path d="M0 4L3.500 0 7 4z" fill="#a3a3a3"/></svg>
<svg style="left:1668px;top:916px;" width="7" height="4" viewBox="0 0 7 4"><path d="M0 0L3.500 4 7 0z" fill="#505050"/></svg>
</div>
</body></html>
